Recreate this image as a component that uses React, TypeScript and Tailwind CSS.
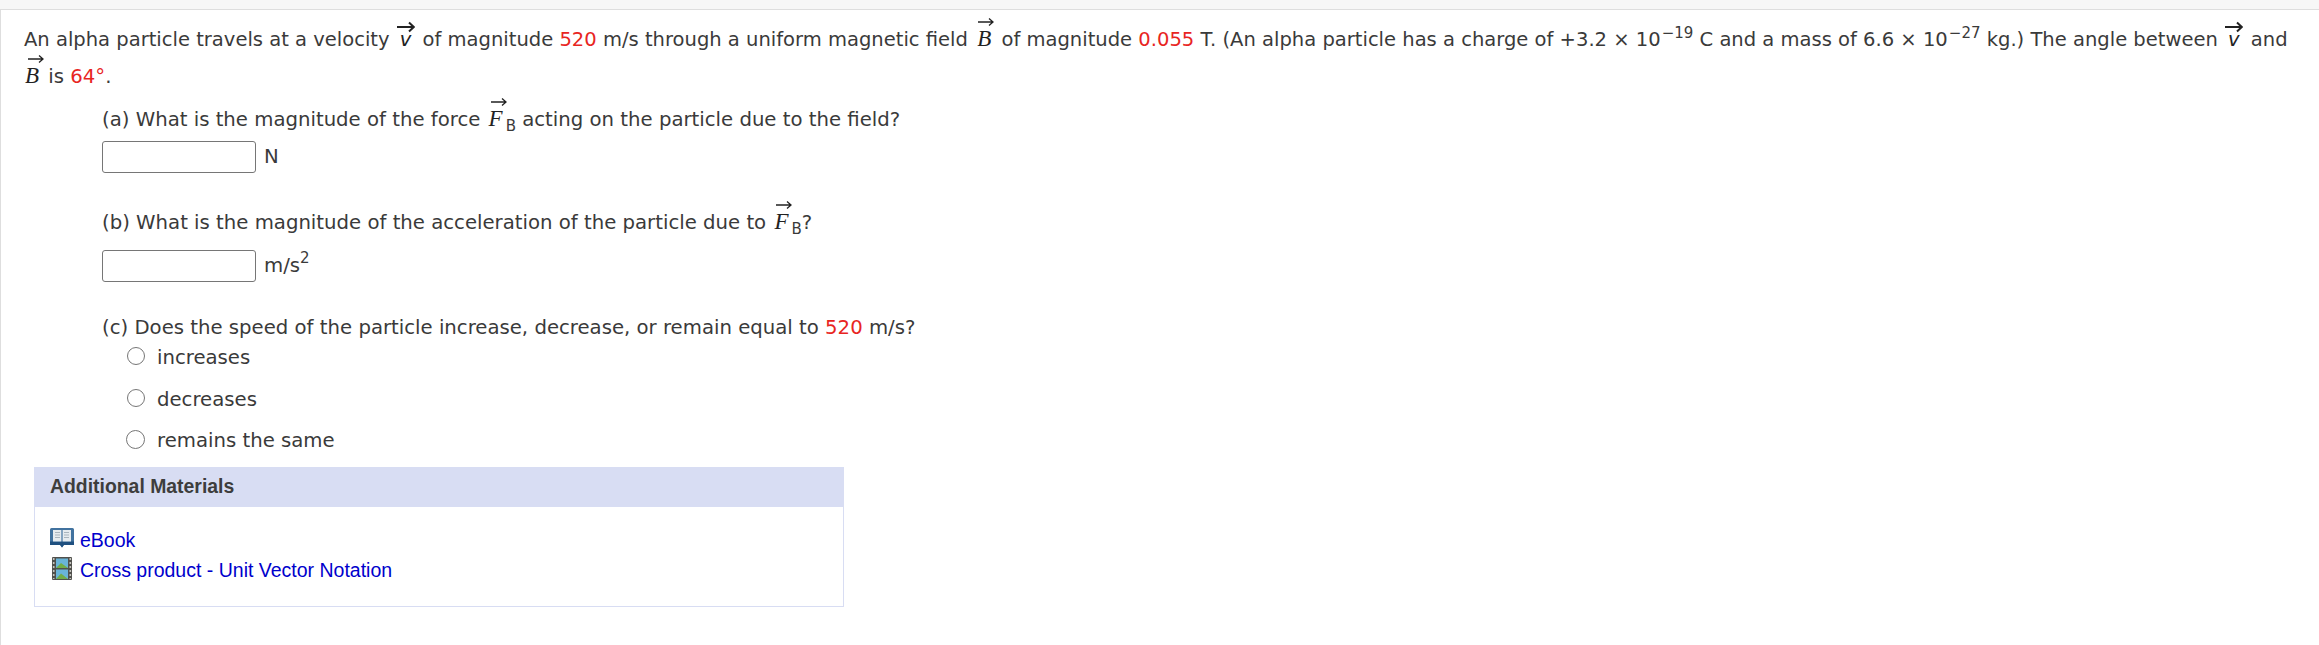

import React from "react";

function VecV() {
  return (
    <span className="relative inline-block italic pl-[4px] pr-[5px] text-[#222]">
      v
      <svg className="absolute left-[1px] top-[0px] w-[18px] h-[12px]" viewBox="0 0 18 12" fill="none" stroke="#222" strokeWidth="2">
        <path d="M0 6H16.5M12 1.5L16.8 6L12 10.5" />
      </svg>
    </span>
  );
}

function VecS({ l, cls }: { l: string; cls: string }) {
  return (
    <span className={`relative inline-block font-['Liberation_Serif',serif] italic text-[23px] leading-none text-[#222] ${cls}`}>
      {l}
      <svg className="absolute left-[4px] top-[-10px] w-[16px] h-[10px]" viewBox="0 0 16 10" fill="none" stroke="#222" strokeWidth="1.3">
        <path d="M0 5H15M11 1.5L15 5L11 8.5" />
      </svg>
    </span>
  );
}

const Red = ({ children }: { children: React.ReactNode }) => <span className="text-[#e8251f]">{children}</span>;

function Exp({ e }: { e: string }) {
  return <sup className="text-[15px] leading-none relative top-[-8px] align-baseline ml-[1px]">{e}</sup>;
}

const Sub = () => <sub className="text-[15px] leading-none relative top-[5px] align-baseline">B</sub>;

function Radio({ label, cls, big }: { label: string; cls: string; big?: boolean }) {
  return (
    <div className={`flex items-center h-[28px] pl-[25px] ${cls}`}>
      {big ? (
        <span className="w-[19px] h-[19px] mb-[4px] ml-[-1px] mr-[12px] rounded-full border-[1.5px] border-[#767676] bg-white" />
      ) : (
        <span className="w-[18px] h-[18px] mb-[4px] mr-[12px] rounded-full border-[1.5px] border-[#767676] bg-white" />
      )}
      <span>{label}</span>
    </div>
  );
}

function AnswerBox({ children }: { children: React.ReactNode }) {
  return (
    <div className="flex items-center">
      <div className="w-[154px] h-[32px] border border-[#767676] rounded-[3px] bg-white" />
      <span className="ml-[8px]">{children}</span>
    </div>
  );
}

function BookIcon() {
  return (
    <svg width="24" height="20" viewBox="0 0 24 20" className="shrink-0 mb-[4px]">
      <path d="M0 1.5Q0 0 1.5 0h21Q24 0 24 1.5V16.5H14L12 19.5L10 16.5H0z" fill="#41729f" />
      <path d="M0 13.5h24v3.5H14l-2 2.5-2-2.5H0z" fill="#1f5080" />
      <path d="M3 2h8.4v11.5H3zM12.6 2H21v11.5h-8.4z" fill="#e6ebef" />
      <path d="M5 4.5h5M5 7h5M5 9.5h5M14 4.5h5M14 7h5M14 9.5h5" stroke="#a9b4bd" strokeWidth="1" />
    </svg>
  );
}

function FilmIcon() {
  return (
    <svg width="20" height="23" viewBox="0 0 20 23" className="shrink-0 ml-[2px] mr-[2px] mb-[3px]">
      <rect x="0" y="0" width="20" height="23" rx="1" fill="#50504c" />
      <path d="M1.7 1v21M18.3 1v21" stroke="#c4c4be" strokeWidth="1.6" strokeDasharray="2 2" />
      <rect x="4" y="1.5" width="12" height="9.5" fill="#69b4d8" />
      <path d="M4 11L9 6l7 5z" fill="#72ad48" />
      <rect x="4" y="12.5" width="12" height="9.5" fill="#69b4d8" />
      <path d="M4 22L9 16.5l7 5.5z" fill="#72ad48" />
    </svg>
  );
}

export default function App() {
  return (
    <div className="w-[2319px] h-[645px] overflow-hidden bg-white font-['DejaVu_Sans','Verdana',sans-serif] text-[19.7px] text-[#3a3a3a]">
      <div className="h-[10px] bg-[#f7f7f7] border-b border-[#dedede]" />
      <div className="border-l border-[#dedede] h-full pl-[23px] pt-[11px]">
        <div className="h-[37px] leading-[37px] whitespace-nowrap text-[19.55px]">
          An alpha particle travels at a velocity <VecV /> of magnitude <Red>520</Red> m/s through a uniform magnetic field <VecS l="B" cls="pl-[3px] pr-[4px]" /> of magnitude <Red>0.055</Red> T. (An alpha particle has a charge of +3.2 × 10<Exp e="−19" /> C and a mass of 6.6 × 10<Exp e="−27" /> kg.) The angle between <VecV /> and
        </div>
        <div className="h-[37px] leading-[37px] whitespace-nowrap">
          <VecS l="B" cls="pl-[1px] pr-[3px]" /> is <Red>64°</Red>.
        </div>
        <div className="pl-[78px]">
          <div className="mt-[11px] h-[28px] leading-[28px] whitespace-nowrap">
            (a) What is the magnitude of the force <VecS l="F" cls="pl-[2px] pr-[3px]" /><Sub /> acting on the particle due to the field?
          </div>
          <div className="mt-[7px]"><AnswerBox>N</AnswerBox></div>
          <div className="mt-[36px] h-[28px] leading-[28px] whitespace-nowrap">
            (b) What is the magnitude of the acceleration of the particle due to <VecS l="F" cls="pl-[2px] pr-[3px]" /><Sub />?
          </div>
          <div className="mt-[13px]"><AnswerBox>m/s<sup className="text-[15px] leading-none relative top-[-9px] align-baseline">2</sup></AnswerBox></div>
          <div className="mt-[32px] h-[28px] leading-[28px] whitespace-nowrap">
            (c) Does the speed of the particle increase, decrease, or remain equal to <Red>520</Red> m/s?
          </div>
          <Radio label="increases" cls="mt-[2px]" />
          <Radio label="decreases" cls="mt-[14px]" />
          <Radio label="remains the same" cls="mt-[13px]" big />
        </div>
        <div className="ml-[10px] mt-[12px] w-[810px] h-[140px] border border-[#d8ddf3] font-['Liberation_Sans',Arial,sans-serif]">
          <div className="h-[39px] bg-[#d8ddf3] pl-[15px] pb-[1px] flex items-center font-bold text-[19.4px] text-[#3d3d3d]">Additional Materials</div>
          <div className="pl-[15px] pt-[18px] text-[19.5px] text-[#0000cc] leading-[30px]">
            <div className="flex items-center gap-[6px]"><BookIcon /><span>eBook</span></div>
            <div className="flex items-center gap-[6px]"><FilmIcon /><span>Cross product - Unit Vector Notation</span></div>
          </div>
        </div>
      </div>
    </div>
  );
}
